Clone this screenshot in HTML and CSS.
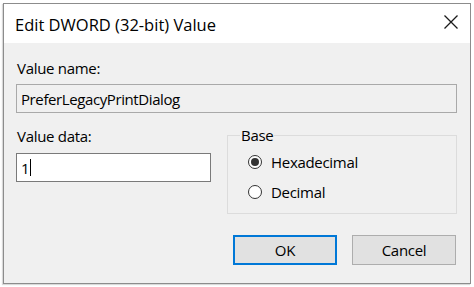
FILE: index.html
```html
<!DOCTYPE html>
<html lang="en">
<head>
  <meta charset="UTF-8">
  <meta name="viewport" content="width=device-width, initial-scale=1.0">
  <title>Edit DWORD (32-bit) Value</title>
  <link rel="stylesheet" href="styles.css">
</head>
<body>
  <div class="dialog">
    <div class="titlebar">
      <span class="title">Edit DWORD (32-bit) Value</span>
      <button class="close" type="button" aria-label="Close">
        <svg width="14" height="14" viewBox="0 0 14 14">
          <path d="M0.5 0.5 L13.5 13.5 M13.5 0.5 L0.5 13.5" stroke="#1a1a1a" stroke-width="1.3" fill="none"/>
        </svg>
      </button>
    </div>

    <div class="content">
      <label class="field-label" for="valueName">Value name:</label>
      <div class="textbox readonly" id="valueName">PreferLegacyPrintDialog</div>

      <div class="row">
        <div class="data-col">
          <label class="field-label" for="valueData">Value data:</label>
          <div class="textbox" id="valueData">1<span class="caret"></span></div>
        </div>

        <fieldset class="base">
          <legend>Base</legend>
          <div class="radio">
            <span class="dot checked"></span>
            <span>Hexadecimal</span>
          </div>
          <div class="radio">
            <span class="dot"></span>
            <span>Decimal</span>
          </div>
        </fieldset>
      </div>

      <div class="buttons">
        <button class="btn default" type="button">OK</button>
        <button class="btn" type="button">Cancel</button>
      </div>
    </div>
  </div>
</body>
</html>
```

FILE: styles.css
```css
body {
  margin: 0;
  background-color: #ffffff;
  font-family: "Open Sans", "Noto Sans", sans-serif;
  font-size: 15px;
  color: #000000;
}

.dialog {
  margin: 3px;
  width: 466px;
  height: 279px;
  border: 1px solid #8c8c8c;
  box-shadow: -1px 1px 1px rgba(0, 0, 0, 0.15);
  background-color: #f0f0f0;
  display: flex;
  flex-direction: column;
}

.titlebar {
  height: 39px;
  background-color: #ffffff;
  display: flex;
  align-items: center;
  justify-content: space-between;
  padding: 0 12px 0 11px;
}

.title {
  font-size: 16.5px;
  margin-top: 1px;
}

.close {
  border: none;
  background: none;
  padding: 0;
  width: 14px;
  height: 14px;
  margin-top: -4px;
  display: flex;
}

.content {
  flex: 1;
  padding: 15px 13px 0 12px;
  display: flex;
  flex-direction: column;
}

.field-label {
  display: block;
  padding-left: 1px;
  line-height: 20px;
  letter-spacing: -0.3px;
}

.textbox {
  height: 27px;
  border: 1px solid #7a7a7a;
  background-color: #ffffff;
  padding: 0 4px;
  display: flex;
  align-items: center;
  letter-spacing: -0.4px;
}

.textbox.readonly {
  margin-top: 6px;
  background-color: #f0f0f0;
  border-color: #a9a9a9;
}

.caret {
  display: inline-block;
  width: 1px;
  height: 17px;
  margin-left: 1px;
  background-color: #000000;
}

.row {
  margin-top: 13px;
  display: flex;
  gap: 16px;
}

.data-col {
  width: 195px;
}

.data-col .textbox {
  margin-top: 7px;
}

.base {
  flex: 1;
  margin: 0;
  height: 88px;
  box-sizing: border-box;
  border: 1px solid #dcdcdc;
  padding: 3px 0 0 12px;
}

.base legend {
  padding: 0 1px;
  line-height: 18px;
  letter-spacing: -0.3px;
}

.radio {
  display: flex;
  align-items: center;
  gap: 9px;
  height: 30px;
  padding-left: 8px;
  letter-spacing: -0.3px;
}

.dot {
  width: 12px;
  height: 12px;
  border: 1px solid #333333;
  border-radius: 50%;
  background-color: #ffffff;
  display: flex;
  align-items: center;
  justify-content: center;
}

.dot.checked::after {
  content: "";
  width: 8px;
  height: 8px;
  border-radius: 50%;
  background-color: #333333;
}

.buttons {
  margin-top: 21px;
  display: flex;
  justify-content: flex-end;
  gap: 15px;
  padding-right: 1px;
}

.btn {
  width: 104px;
  height: 30px;
  font-family: inherit;
  font-size: 15px;
  letter-spacing: -0.3px;
  color: #000000;
  background-color: #e1e1e1;
  border: 1px solid #adadad;
  padding: 0;
}

.btn.default {
  border: 2px solid #0078d7;
}
```
